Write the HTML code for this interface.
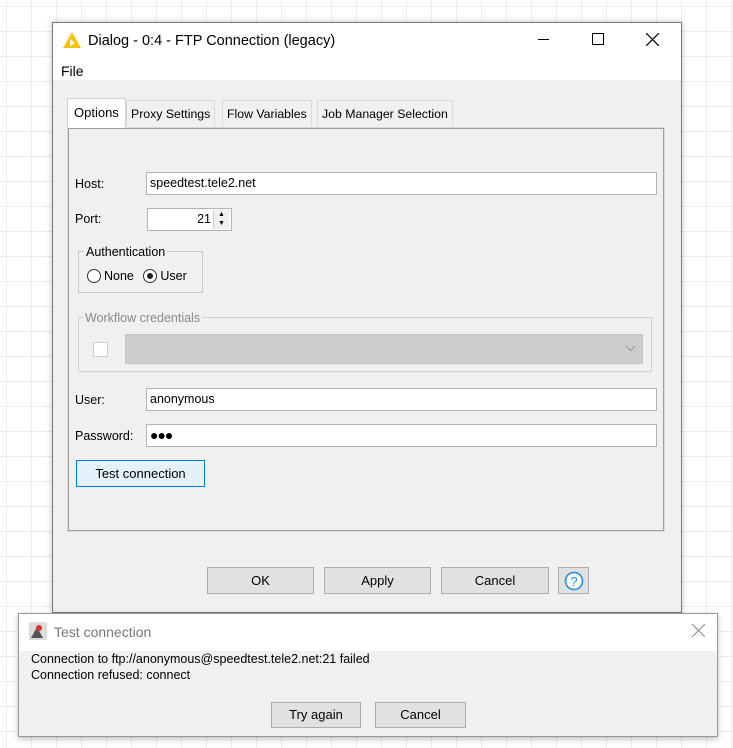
<!DOCTYPE html>
<html><head><meta charset="utf-8"><style>
*{box-sizing:border-box;margin:0;padding:0}
body{width:733px;height:748px;position:relative;overflow:hidden;font-family:"Liberation Sans",sans-serif;font-size:12.5px;color:#000;
background-color:#fff;background-image:linear-gradient(#ececec 1px,transparent 1px),linear-gradient(90deg,#ececec 1px,transparent 1px);background-size:25px 25px;background-position:6px 6px}
.a{position:absolute}
.inp{position:absolute;background:#fff;border:1px solid #b4b4b4;height:23px;line-height:21px;padding-left:3px}
.btn{position:absolute;background:#e1e1e1;border:1px solid #adadad;height:27px;line-height:25px;text-align:center;font-size:13px}
.tab{position:absolute;top:100px;height:26px;line-height:26px;border:1px solid #d9d9d9;border-bottom:none;background:#f0f0f0;padding:0 4px;font-size:12.3px}
.radio{display:inline-block;width:14px;height:14px;border:1px solid #333;border-radius:50%;vertical-align:-3px;margin-right:3px;position:relative;background:#fff}
</style></head><body>
<div class="a" style="left:52px;top:22px;width:630px;height:591px;background:#f0f0f0;border:1px solid #7a7a7a;box-shadow:0 0 6px rgba(0,0,0,.25)"></div>
<div class="a" style="left:53px;top:23px;width:628px;height:57px;background:#fff"></div>
<svg class="a" style="left:62px;top:31px" width="20" height="18" viewBox="0 0 20 18"><path d="M10 1 L19 17 L1 17 Z" fill="#f5c400"/><path d="M8 8 L13 12 L8 15 Z" fill="#fff"/></svg>
<div class="a" style="left:88px;top:33px;font-size:14.5px">Dialog - 0:4 - FTP Connection (legacy)</div>
<div class="a" style="left:538px;top:39px;width:11px;height:1px;background:#000"></div>
<div class="a" style="left:592px;top:33px;width:12px;height:12px;border:1px solid #000"></div>
<svg class="a" style="left:646px;top:33px" width="13" height="13"><path d="M0 0L13 13M13 0L0 13" stroke="#000" stroke-width="1.2"/></svg>
<div class="a" style="left:61px;top:63px;font-size:14px">File</div>
<div class="tab" style="left:67px;top:98px;height:30px;background:#fff;border-color:#d0d0d0;z-index:2;padding:0 6px;line-height:27px;font-size:13px">Options</div>
<div class="tab" style="left:126px">Proxy Settings</div>
<div class="tab" style="left:222px">Flow Variables</div>
<div class="tab" style="left:317px">Job Manager Selection</div>
<div class="a" style="left:67px;top:127px;width:598px;height:405px;border:1px solid #d9d9d9;background:#fff"></div>
<div class="a" style="left:68px;top:128px;width:596px;height:403px;border:1px solid #a0a0a0;background:#f0f0f0"></div>
<div class="a" style="left:75px;top:177px">Host:</div>
<div class="inp" style="left:146px;top:172px;width:511px">speedtest.tele2.net</div>
<div class="a" style="left:75px;top:212px">Port:</div>
<div class="inp" style="left:147px;top:208px;width:85px;text-align:right;padding-right:20px">21</div>
<div class="a" style="left:213px;top:210px;width:16px;height:19px;border-left:1px solid #ccc;font-size:7px;line-height:9px;text-align:center;background:#f0f0f0">▲<br>▼</div>
<div class="a" style="left:78px;top:251px;width:125px;height:42px;border:1px solid #c8c8c8"></div>
<div class="a" style="left:84px;top:245px;background:#f0f0f0;padding:0 2px">Authentication</div>
<div class="a" style="left:87px;top:269px"><span class="radio"></span>None <span class="radio" style="margin-left:6px"><span class="a" style="left:3px;top:3px;width:6px;height:6px;border-radius:50%;background:#222"></span></span>User</div>
<div class="a" style="left:78px;top:317px;width:574px;height:55px;border:1px solid #d0d0d0"></div>
<div class="a" style="left:83px;top:311px;background:#f0f0f0;padding:0 2px;color:#8a8a8a">Workflow credentials</div>
<div class="a" style="left:93px;top:342px;width:15px;height:15px;border:1px solid #ccc;background:#fff"></div>
<div class="a" style="left:125px;top:334px;width:518px;height:30px;background:#cccccc;border:1px solid #c4c4c4"></div>
<svg class="a" style="left:625px;top:345px" width="11" height="7"><path d="M1 1L5.5 5.5L10 1" stroke="#999" fill="none"/></svg>
<div class="a" style="left:75px;top:393px">User:</div>
<div class="inp" style="left:146px;top:388px;width:511px">anonymous</div>
<div class="a" style="left:75px;top:429px">Password:</div>
<div class="inp" style="left:146px;top:424px;width:511px;font-size:14px;letter-spacing:-1px">●●●</div>
<div class="btn" style="left:76px;top:460px;width:129px;height:27px;background:#e5f1fb;border-color:#0078d7">Test connection</div>
<div class="btn" style="left:207px;top:567px;width:107px">OK</div>
<div class="btn" style="left:324px;top:567px;width:107px">Apply</div>
<div class="btn" style="left:441px;top:567px;width:108px">Cancel</div>
<div class="btn" style="left:558px;top:567px;width:31px"><svg style="margin-top:3px" width="20" height="20"><circle cx="10" cy="10" r="8.5" stroke="#1e8ee8" stroke-width="1.6" fill="#fff"/><text x="10" y="15" text-anchor="middle" font-family="Liberation Sans" font-size="13" fill="#1e8ee8">?</text></svg></div>
<div class="a" style="left:18px;top:613px;width:700px;height:124px;background:#f0f0f0;border:1px solid #9a9a9a;box-shadow:0 2px 6px rgba(0,0,0,.25)"></div>
<div class="a" style="left:19px;top:614px;width:698px;height:37px;background:#fff"></div>
<svg class="a" style="left:28px;top:621px" width="20" height="20"><rect x="1" y="1" width="18" height="18" fill="#ddd"/><path d="M3 17L9 6L15 17Z" fill="#555"/><circle cx="11" cy="7" r="3" fill="#d33"/></svg>
<div class="a" style="left:54px;top:624px;font-size:14px;color:#777">Test connection</div>
<svg class="a" style="left:692px;top:624px" width="13" height="13"><path d="M0 0L13 13M13 0L0 13" stroke="#888" stroke-width="1"/></svg>
<div class="a" style="left:31px;top:652px">Connection to ftp://anonymous@speedtest.tele2.net:21 failed</div>
<div class="a" style="left:31px;top:668px">Connection refused: connect</div>
<div class="btn" style="left:271px;top:702px;width:90px;height:26px;line-height:24px">Try again</div>
<div class="btn" style="left:375px;top:702px;width:91px;height:26px;line-height:24px">Cancel</div>
</body></html>
